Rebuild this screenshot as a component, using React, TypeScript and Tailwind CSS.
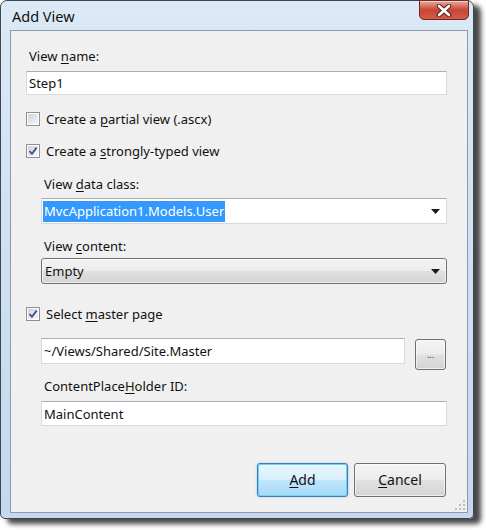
import React from "react";

const F = "font-['Noto_Sans','Open_Sans',sans-serif]";

function U({ children }: { children: React.ReactNode }) {
  return <span className="underline decoration-1 underline-offset-[2px]">{children}</span>;
}

function Check({ checked }: { checked?: boolean }) {
  return (
    <span className="w-[14px] h-[14px] border border-[#8e8f8f] bg-white p-[1px] flex shrink-0">
      <span className="flex-1 bg-gradient-to-br from-[#cfd3d9] to-[#f7f7f7] flex items-center justify-center">
        {checked && (
          <svg width="10" height="10" viewBox="0 0 10 10">
            <path d="M1.5 5 L4 7.8 L8.6 1.6" fill="none" stroke="#3b4f8f" strokeWidth="1.8" strokeLinejoin="round" />
          </svg>
        )}
      </span>
    </span>
  );
}

function Arrow() {
  return (
    <svg width="9" height="5" viewBox="0 0 9 5" className="shrink-0">
      <path d="M0 0 H9 L4.5 5 Z" fill="#1a1a1a" />
    </svg>
  );
}

function TextBox({ value, className = "" }: { value: string; className?: string }) {
  return (
    <div
      className={`bg-white border border-[#d5d9e0] border-t-[#abadb3] flex items-center pl-[2px] text-[13px] text-[#111] ${className}`}
    >
      {value}
    </div>
  );
}

export default function App() {
  return (
    <div className={`w-[486px] h-[530px] bg-white overflow-hidden ${F}`}>
      <div className="w-[474px] h-[519px] rounded-t-[7px] rounded-b-[5px] border border-[#3e4650] bg-gradient-to-b from-[#dce9f6] via-[#cfe0f2] to-[#c4d8ee] shadow-[7px_5px_5px_rgba(0,0,0,0.72)] relative">
        {/* title bar */}
        <div className="h-[29px] flex items-center pl-[11px] relative">
          <span className="text-[14.5px] text-[#111] leading-none mt-[1px]">Add View</span>
          <div className="absolute right-[4px] top-[-1px] w-[50px] h-[20px] rounded-b-[5px] border border-[#6b2a22] bg-gradient-to-b from-[#e9a896] via-[#c6453a] to-[#d65a44] flex items-center justify-center shadow-[inset_0_1px_0_rgba(255,255,255,0.5)]">
            <svg width="16" height="13" viewBox="0 0 16 13">
              <path d="M3 2 L13 11 M13 2 L3 11" stroke="#5a1f1a" strokeWidth="4.5" strokeLinecap="round" />
              <path d="M3 2 L13 11 M13 2 L3 11" stroke="#ffffff" strokeWidth="2.6" strokeLinecap="round" />
            </svg>
          </div>
        </div>
        {/* client */}
        <div className="ml-[9px] mr-[5px] h-[483px] border border-[#8d9aab] bg-[#f0f0f0] flex flex-col pl-[15px] pr-[20px] text-[13px] text-[#111] leading-[18px] relative">
          <div className="mt-[16px] pl-[3px]">
            View <U>n</U>ame:
          </div>
          <TextBox value="Step1" className="mt-[6px] h-[24px]" />

          <div className="mt-[15px] flex items-center gap-[6px] h-[18px]">
            <Check />
            <span>
              Create a <U>p</U>artial view (.ascx)
            </span>
          </div>
          <div className="mt-[14px] flex items-center gap-[6px] h-[18px]">
            <Check checked />
            <span>
              Create a <U>s</U>trongly-typed view
            </span>
          </div>

          <div className="pl-[15px] flex flex-col">
            <div className="mt-[15px] pl-[3px]">
              View <U>d</U>ata class:
            </div>
            <div className="mt-[5px] h-[26px] bg-white border border-[#d5d9e0] border-t-[#abadb3] flex items-center pl-[1px] pr-[6px]">
              <span className="bg-[#3399ff] text-white h-[21px] flex items-center px-[1px]">
                MvcApplication1.Models.User
              </span>
              <span className="flex-1" />
              <Arrow />
            </div>

            <div className="mt-[13px] pl-[3px]">
              View <U>c</U>ontent:
            </div>
            <div className="mt-[3px] h-[26px] rounded-[3px] border border-[#707070] bg-[linear-gradient(#f4f4f4_0%,#ececec_48%,#e0e0e0_52%,#d4d4d4_100%)] flex items-center pl-[3px] pr-[6px] shadow-[inset_0_0_0_1px_rgba(255,255,255,0.6)]">
              <span className="flex-1">Empty</span>
              <Arrow />
            </div>
          </div>

          <div className="mt-[21px] flex items-center gap-[6px] h-[18px]">
            <Check checked />
            <span>
              Select <U>m</U>aster page
            </span>
          </div>

          <div className="pl-[15px] flex flex-col">
            <div className="mt-[15px] flex items-start h-[32px]">
              <TextBox value="~/Views/Shared/Site.Master" className="w-[364px] h-[26px]" />
              <div className="ml-[10px] mt-[1px] w-[31px] h-[31px] rounded-[3px] border border-[#707070] bg-[linear-gradient(#f4f4f4_0%,#ececec_48%,#e0e0e0_52%,#d4d4d4_100%)] shadow-[inset_0_0_0_1px_rgba(255,255,255,0.6)] flex items-center justify-center text-[9px] text-[#333] leading-none">
                ...
              </div>
            </div>
            <div className="mt-[7px] pl-[3px]">
              ContentPlace<U>H</U>older ID:
            </div>
            <TextBox value="MainContent" className="mt-[6px] h-[25px]" />
          </div>

          <div className="mt-[37px] flex justify-end gap-[6px] pr-[1px]">
            <div className="w-[91px] h-[34px] rounded-[3px] border border-[#3c7fb1] bg-[linear-gradient(#eaf6fd_0%,#d9f0fc_48%,#bee6fd_52%,#a7d9f5_100%)] shadow-[inset_0_0_0_1px_#6fd0f8,0_0_2px_rgba(60,160,230,0.6)] flex items-center justify-center text-[14px]">
              <span>
                <U>A</U>dd
              </span>
            </div>
            <div className="w-[92px] h-[34px] rounded-[3px] border border-[#707070] bg-[linear-gradient(#f4f4f4_0%,#ececec_48%,#e0e0e0_52%,#d4d4d4_100%)] shadow-[inset_0_0_0_1px_rgba(255,255,255,0.6)] flex items-center justify-center text-[14px]">
              <span>
                <U>C</U>ancel
              </span>
            </div>
          </div>

          <svg className="absolute right-[2px] bottom-[2px]" width="11" height="11" viewBox="0 0 11 11">
            {[
              [9, 1],
              [9, 5],
              [5, 5],
              [9, 9],
              [5, 9],
              [1, 9],
            ].map(([x, y], i) => (
              <rect key={i} x={x} y={y} width="2" height="2" fill="#b9bfc7" />
            ))}
          </svg>
        </div>
      </div>
    </div>
  );
}
